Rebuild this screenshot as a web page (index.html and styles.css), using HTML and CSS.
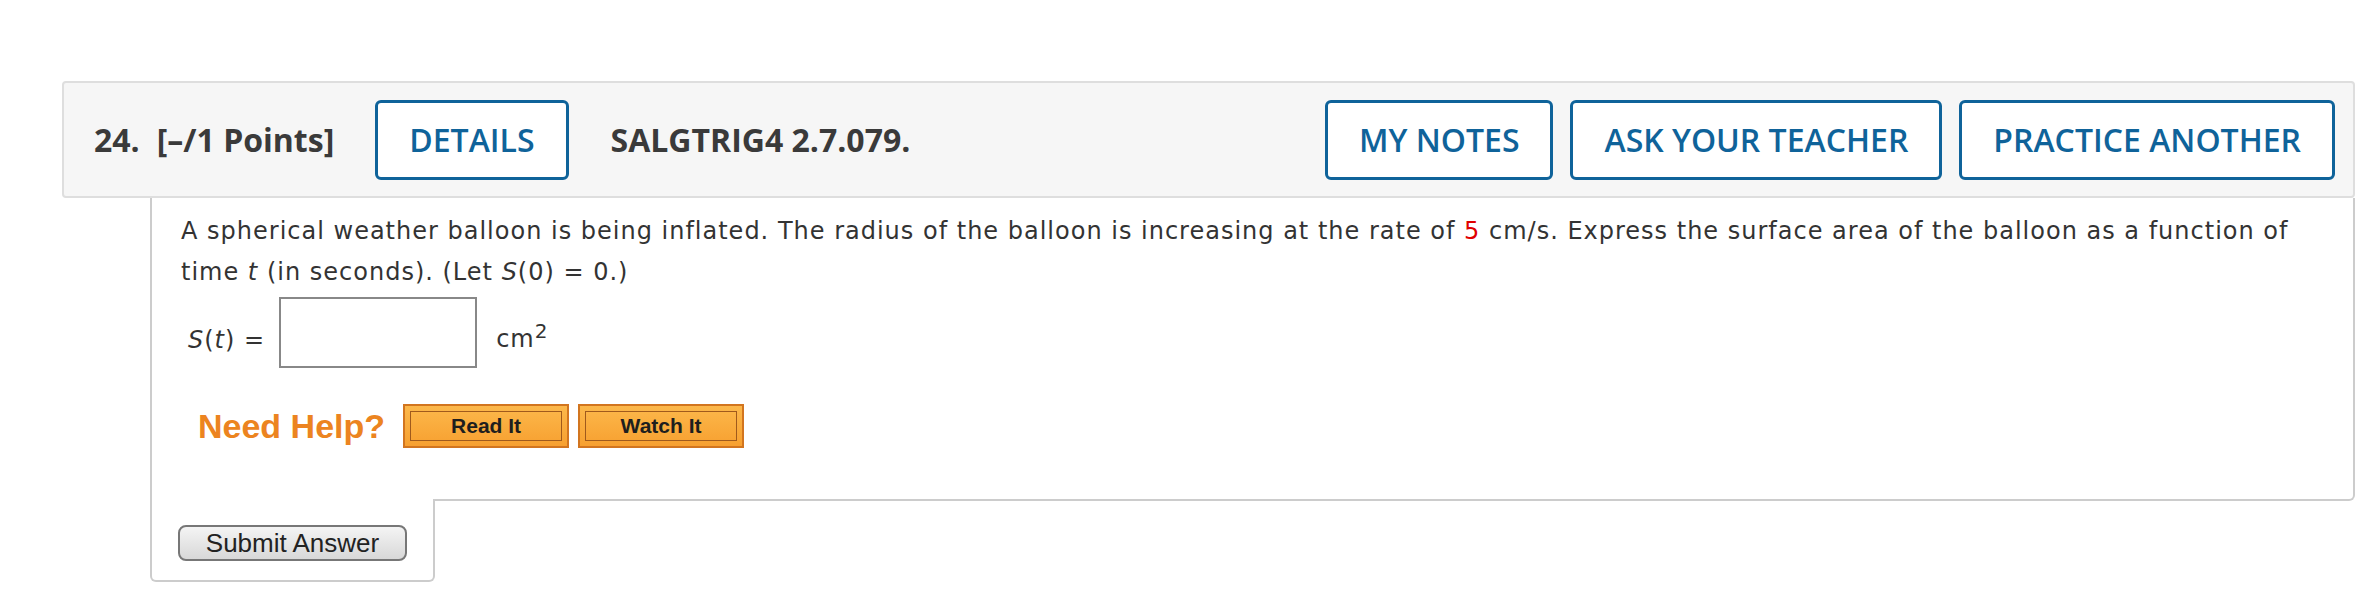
FILE: index.html
```html
<!DOCTYPE html>
<html>
<head>
<meta charset="utf-8">
<title>Question 24</title>
<link rel="stylesheet" href="styles.css">
</head>
<body>
<div class="question">
  <div class="qhead">
    <span class="qnum">24.</span>
    <span class="qpts">[–/1 Points]</span>
    <span class="hbtn details">DETAILS</span>
    <span class="qid">SALGTRIG4 2.7.079.</span>
    <div class="hright">
      <span class="hbtn">MY NOTES</span>
      <span class="hbtn">ASK YOUR TEACHER</span>
      <span class="hbtn">PRACTICE ANOTHER</span>
    </div>
  </div>
  <div class="qbody">
    <p class="qtext">A spherical weather balloon is being inflated. The radius of the balloon is increasing at the rate of <span class="red">5</span> cm/s. Express the surface area of the balloon as a function of time <i>t</i> (in seconds). (Let <i>S</i>(0) = 0.)</p>
    <div class="answer">
      <span class="lbl"><i>S</i>(<i>t</i>) =</span>
      <span class="ansbox"></span>
      <span class="unit">cm<sup>2</sup></span>
    </div>
    <div class="help">
      <span class="needhelp">Need Help?</span>
      <span class="obtn readit"><span class="obtn-in">Read It</span></span>
      <span class="obtn"><span class="obtn-in">Watch It</span></span>
    </div>
  </div>
  <div class="submitbar">
    <span class="submit">Submit Answer</span>
  </div>
</div>
</body>
</html>
```

FILE: styles.css
```css
html, body {
  margin: 0;
  padding: 0;
  background: #ffffff;
}

.question {
  padding: 81px 11px 0 62px;
}

.qhead {
  display: flex;
  align-items: center;
  height: 117px;
  box-sizing: border-box;
  padding: 0 18px 0 30px;
  background: #f6f6f6;
  border: 2px solid #dedede;
  border-radius: 4px;
  font-family: "Open Sans", "Liberation Sans", sans-serif;
  color: #3a3a3a;
}

.qnum {
  font-weight: 700;
  font-size: 32px;
  margin-right: 17px;
}

.qpts {
  font-weight: 700;
  font-size: 32px;
  margin-right: 41px;
}

.qid {
  font-weight: 700;
  font-size: 32px;
  margin-left: 42px;
}

.hbtn {
  display: flex;
  align-items: center;
  justify-content: center;
  height: 80px;
  box-sizing: border-box;
  padding: 0 31px;
  border: 3px solid #0f639a;
  border-radius: 6px;
  background: #ffffff;
  color: #0f639a;
  font-size: 32px;
  font-weight: 600;
  white-space: nowrap;
}

.hright {
  margin-left: auto;
  display: flex;
  gap: 17px;
}

.qbody {
  margin-left: 88px;
  border: 2px solid #cccccc;
  border-top: 0;
  border-bottom-right-radius: 6px;
  padding: 13px 40px 51px 29px;
  font-family: "DejaVu Sans", Verdana, sans-serif;
  color: #333333;
}

.qtext {
  margin: 0;
  font-size: 24px;
  letter-spacing: 1px;
  line-height: 41px;
}

.red {
  color: #e00000;
}

.answer {
  display: flex;
  align-items: center;
  margin-top: 4px;
  padding-left: 7px;
  font-size: 24px;
  letter-spacing: 1px;
}

.lbl {
  margin-right: 14px;
  margin-top: 14px;
}

.ansbox {
  display: block;
  width: 198px;
  height: 71px;
  box-sizing: border-box;
  border: 2px solid #888888;
  background: #ffffff;
}

.unit {
  margin-left: 19px;
  margin-top: 12px;
}

.unit sup {
  font-size: 20px;
  line-height: 0;
}

.help {
  display: flex;
  align-items: center;
  margin-top: 36px;
  padding-left: 17px;
  font-family: "Liberation Sans", Arial, sans-serif;
}

.needhelp {
  color: #ec8420;
  font-weight: 700;
  font-size: 34px;
  margin-right: 18px;
}

.obtn {
  display: block;
  width: 166px;
  height: 44px;
  box-sizing: border-box;
  border: 2px solid #d2751f;
  background: linear-gradient(#fcb84b, #f7a030);
  padding: 5px;
}

.readit {
  margin-right: 9px;
}

.obtn-in {
  display: flex;
  align-items: center;
  justify-content: center;
  height: 100%;
  box-sizing: border-box;
  border: 1px solid #a05a1c;
  color: #1e1e1e;
  font-weight: 700;
  font-size: 21px;
}

.submitbar {
  width: 285px;
  box-sizing: border-box;
  margin-left: 88px;
  margin-top: -2px;
  position: relative;
  background: #ffffff;
  border: 2px solid #cccccc;
  border-top: 0;
  border-radius: 0 0 6px 6px;
  padding: 26px 26px 19px 26px;
}

.submit {
  display: flex;
  align-items: center;
  justify-content: center;
  height: 36px;
  box-sizing: border-box;
  border: 2px solid #777777;
  border-radius: 8px;
  background: linear-gradient(#f4f4f4, #d8d8d8);
  font-family: "Liberation Sans", Arial, sans-serif;
  font-size: 26px;
  color: #222222;
}
```
